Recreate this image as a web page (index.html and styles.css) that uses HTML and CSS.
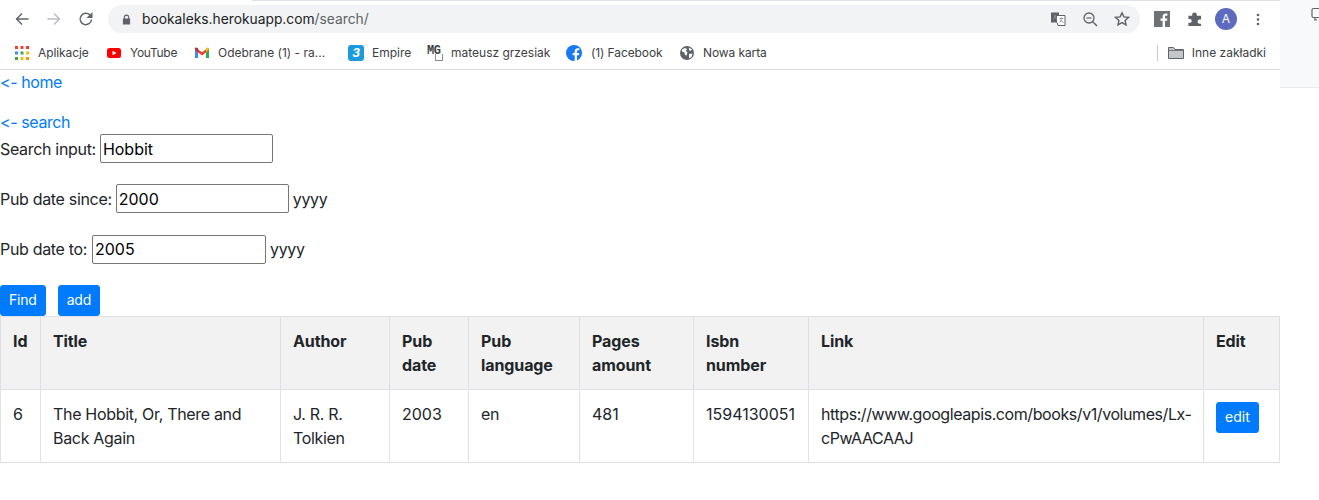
FILE: index.html
```html
<!DOCTYPE html>
<html lang="pl">
<head>
    <meta charset="UTF-8">
    <title>bookaleks</title>
    <link rel="stylesheet" href="styles.css">
</head>
<body>
<div class="window">
    <div class="browser">
        <div class="toolbar">
            <svg class="nav-icon" viewBox="0 0 16 16"><path d="M14.500 8H2.500M8 2.500L2.500 8 8 13.500" fill="none" stroke="#5f6368" stroke-width="1.400"/></svg>
            <svg class="nav-icon" viewBox="0 0 16 16"><path d="M1.500 8h12M8 2.500L13.500 8 8 13.500" fill="none" stroke="#b9bcc0" stroke-width="1.400"/></svg>
            <svg class="nav-icon" viewBox="0 0 16 16"><path d="M13.500 8.500A5.700 5.700 0 1 1 11.800 3.900" fill="none" stroke="#5f6368" stroke-width="1.500"/><path d="M14.500 1V7H8.500z" fill="#5f6368"/></svg>
            <div class="address">
                <svg class="lock" viewBox="0 0 10 12"><path d="M2 5V3.500a3 3 0 0 1 6 0V5h1v6.500H1V5zM3.200 5h3.600V3.500a1.800 1.800 0 0 0-3.600 0z" fill="#5f6368"/></svg>
                <span class="url">bookaleks.herokuapp.com<span class="url-path">/search/</span></span>
                <span class="address-end">
                    <svg class="addr-icon" viewBox="0 0 16 16"><rect x="1" y="1.500" width="8" height="10" fill="#5f6368"/><path d="M7 4.500h8v10H8L7 11.500" fill="#fff" stroke="#5f6368"/><path d="M3.500 8.500L5 4l1.500 4.500M9.500 7.500h4M11.500 6.500c0 3-1 4.500-2 5M10.500 9c1 1.500 2 2 3 2.500" fill="none" stroke="#8b8e92" stroke-width=".9"/></svg>
                    <svg class="addr-icon" viewBox="0 0 16 16"><circle cx="7" cy="7" r="5" fill="none" stroke="#5f6368" stroke-width="1.300"/><path d="M10.500 10.500L15 15" stroke="#5f6368" stroke-width="1.400"/><path d="M4.500 7h5" stroke="#5f6368" stroke-width="1.200"/></svg>
                    <svg class="addr-icon" viewBox="0 0 16 16"><path d="M8 1.800l1.900 4.100 4.500.5-3.300 3 .9 4.400L8 11.600l-4 2.200.9-4.400-3.300-3 4.500-.5z" fill="none" stroke="#5f6368" stroke-width="1.400"/></svg>
                </span>
            </div>
            <div class="toolbar-end">
                <svg class="ext-fb" viewBox="0 0 16 16"><rect width="16" height="16" fill="#6e7175"/><path d="M11 16V9.800h2l.3-2.400H11V6c0-.7.3-1.200 1.200-1.200h1.200V2.600c-.4 0-1-.1-1.700-.1C10 2.500 8.600 3.700 8.600 5.700v1.700H6.500v2.400h2.100V16z" fill="#fff"/></svg>
                <svg class="ext-puzzle" viewBox="0 0 16 16"><path d="M5.500 3a2.500 2.500 0 0 1 5 0V4H15v4h-1.500a2.300 2.300 0 0 0 0 4.600H15V15H1.500v-3.500H3a2 2 0 0 0 0-4H1.500V4h4z" fill="#5f6368"/></svg>
                <span class="avatar">A</span>
                <svg class="menu-dots" viewBox="0 0 4 16"><circle cx="2" cy="2.500" r="1.600" fill="#5f6368"/><circle cx="2" cy="8" r="1.600" fill="#5f6368"/><circle cx="2" cy="13.500" r="1.600" fill="#5f6368"/></svg>
            </div>
        </div>
        <div class="bookmarks">
            <span class="mark mark-apps">
                <svg viewBox="0 0 14 14"><path d="M0 0h3v3H0z" fill="#ea4335"/><path d="M5.500 0h3v3h-3z" fill="#ea4335"/><path d="M11 0h3v3h-3z" fill="#ea4335"/><path d="M0 5.500h3v3H0z" fill="#4285f4"/><path d="M5.500 5.500h3v3h-3z" fill="#34a853"/><path d="M11 5.500h3v3h-3z" fill="#fbbc05"/><path d="M0 11h3v3H0z" fill="#34a853"/><path d="M5.500 11h3v3h-3z" fill="#fbbc05"/><path d="M11 11h3v3h-3z" fill="#f29900"/></svg>
                Aplikacje
            </span>
            <span class="mark mark-yt">
                <svg viewBox="0 0 14 14"><rect y="2" width="14" height="10" rx="2.500" fill="#f00"/><path d="M5.500 4.800v4.400L9.500 7z" fill="#fff"/></svg>
                YouTube
            </span>
            <span class="mark mark-gmail">
                <svg viewBox="0 0 14 14"><path d="M0 12V3l1.500-1L3 3.200V12z" fill="#4285f4"/><path d="M11 12V3.200L12.500 2 14 3v9z" fill="#34a853"/><path d="M3 3.200L7 6.300l4-3.100V6.500L7 9.500 3 6.500z" fill="#ea4335"/><path d="M0 3c0-1.300 1.200-1.800 2-1.200L3 2.600v3.900z" fill="#c5221f"/><path d="M14 3c0-1.300-1.200-1.800-2-1.200l-1 .8v3.900z" fill="#fbbc05"/></svg>
                Odebrane (1) - ra...
            </span>
            <span class="mark mark-empire">
                <span class="empire-badge">3</span>
                Empire
            </span>
            <span class="mark mark-mg">
                <span class="mg-badge">MG</span>
                mateusz grzesiak
            </span>
            <span class="mark mark-fb">
                <svg viewBox="0 0 16 16"><circle cx="8" cy="8" r="8" fill="#1877f2"/><path d="M11 16V10.300h1.900l.3-2.300H11V6.500c0-.7.3-1.200 1.300-1.200h1V3.300C12.900 3.200 12.300 3.200 11.700 3.200 9.900 3.200 8.700 4.300 8.700 6.200V8H6.700v2.300h2V16z" fill="#fff"/></svg>
                (1) Facebook
            </span>
            <span class="mark mark-globe">
                <svg viewBox="0 0 14 14"><circle cx="7" cy="7" r="7" fill="#5f6368"/><path d="M2 3.500l3-1.500 2 1-1 2 1.500 1.500-1 3-1.500-.5-.5-2.500L2 5.500zM9 1.500l3 2-1.500 1.500-1.500-1zM9 8l3.500-.5-1 3.500-2.500 1.500z" fill="#fff"/></svg>
                Nowa karta
            </span>
            <span class="mark mark-other">
                <svg viewBox="0 0 16 14"><path d="M.5 12.500V1.500h5l1.500 2h8.500v9z" fill="#c4c6c9" stroke="#5f6368"/><path d="M.5 4.500h15" stroke="#5f6368" stroke-width=".8"/></svg>
                Inne zakładki
            </span>
        </div>
    </div>

    <div class="side-panel">
        <svg viewBox="0 0 16 16"><rect x="1" y="1.500" width="12" height="9" rx="1.500" fill="none" stroke="#5f6368" stroke-width="1.200"/><path d="M3 13h3M8 13h3M4 11v1.500M9 11v1.500" stroke="#5f6368" stroke-width="1.200"/></svg>
    </div>

    <main class="content">
        <p class="back-link"><a href="#">&lt;- home</a></p>
        <a class="back-link-plain" href="#">&lt;- search</a>

        <form class="search-form">
            <div class="form-row">
                <label for="q">Search input:</label>
                <input type="text" id="q" value="Hobbit">
            </div>
            <div class="form-row">
                <label for="since">Pub date since:</label>
                <input type="text" id="since" value="2000">
                <span>yyyy</span>
            </div>
            <div class="form-row form-row-to">
                <label for="to">Pub date to:</label>
                <input type="text" id="to" value="2005">
                <span>yyyy</span>
            </div>
            <div class="form-buttons">
                <button type="button" class="btn">Find</button>
                <button type="button" class="btn">add</button>
            </div>
        </form>

        <table class="books">
            <colgroup>
                <col class="col-id"><col class="col-title"><col class="col-author"><col class="col-date"><col class="col-lang"><col class="col-pages"><col class="col-isbn"><col class="col-link"><col class="col-edit">
            </colgroup>
            <thead>
                <tr>
                    <th>Id</th>
                    <th>Title</th>
                    <th>Author</th>
                    <th>Pub date</th>
                    <th>Pub language</th>
                    <th>Pages amount</th>
                    <th>Isbn number</th>
                    <th>Link</th>
                    <th>Edit</th>
                </tr>
            </thead>
            <tbody>
                <tr>
                    <td class="num">6</td>
                    <td>The Hobbit, Or, There and Back Again</td>
                    <td>J. R. R. Tolkien</td>
                    <td class="num">2003</td>
                    <td>en</td>
                    <td class="num">481</td>
                    <td class="num">1594130051</td>
                    <td class="link-cell">https://www.googleapis.com/books/v1/volumes/Lx-cPwAACAAJ</td>
                    <td><button type="button" class="btn btn-edit">edit</button></td>
                </tr>
            </tbody>
        </table>
    </main>
</div>
</body>
</html>
```

FILE: styles.css
```css
* {
    box-sizing: border-box;
}
body {
    margin: 0;
    background: white;
    color: #212529;
    font-family: Inter, "Liberation Sans", sans-serif;
    font-size: 16px;
    line-height: 24px;
    font-variant-ligatures: none;
    font-feature-settings: "calt" 0;
}
.window {
    display: grid;
    grid-template-columns: 1280px 39px;
    grid-template-rows: 70px auto;
}

/* browser bar */
.browser {
    height: 70px;
    padding-top: 1px;
    border-bottom: 1px solid #d9dadc;
    background: linear-gradient(90deg, white 252px, #dee1e6 252px) top / 100% 1px no-repeat;
    color: #3c4043;
}
.side-panel {
    grid-column: 2;
    grid-row: 1 / 3;
    align-self: start;
    position: relative;
    height: 88px;
    padding: 7px 0 0 31px;
    overflow: hidden;
    background: #f8f9fb;
    border-bottom: 1px solid #e9e9ea;
}
.side-panel::after {
    content: "";
    position: absolute;
    left: 29px;
    right: 0;
    bottom: -1px;
    height: 1px;
    background: #f08a70;
}
.side-panel svg {
    display: block;
    width: 16px;
    height: 16px;
}
.toolbar {
    display: flex;
    align-items: center;
    height: 36px;
    padding-left: 14px;
}
.nav-icon {
    width: 16px;
    height: 16px;
    margin-right: 16px;
    flex: none;
}
.address {
    display: flex;
    align-items: center;
    width: 1032px;
    height: 28px;
    margin-left: -2px;
    padding: 0 10px 0 14px;
    background: #f1f3f4;
    border-radius: 14px;
}
.lock {
    width: 9px;
    height: 11px;
    margin-right: 11px;
}
.url {
    font-size: 13.800px;
    color: #202124;
}
.url-path {
    color: #5f6368;
}
.address-end {
    display: flex;
    gap: 16px;
    margin-left: auto;
}
.addr-icon {
    width: 16px;
    height: 16px;
    display: block;
}
.toolbar-end {
    display: flex;
    align-items: center;
    margin-left: 14px;
}
.ext-fb {
    width: 16px;
    height: 16px;
}
.ext-puzzle {
    width: 15px;
    height: 15px;
    margin-left: 17px;
}
.avatar {
    width: 22px;
    height: 22px;
    margin-left: 13px;
    border-radius: 50%;
    background: #5c6bc0;
    color: white;
    font-size: 12px;
    line-height: 22px;
    text-align: center;
}
.menu-dots {
    width: 4px;
    height: 13px;
    margin-left: 19px;
}
.bookmarks {
    display: flex;
    align-items: center;
    height: 32px;
    padding-left: 15px;
    font-size: 12px;
    line-height: 16px;
}
.mark {
    display: flex;
    align-items: center;
    gap: 9px;
    white-space: nowrap;
}
.mark svg {
    width: 14px;
    height: 14px;
    flex: none;
}
.mark-apps { width: 92px; letter-spacing: -0.1px; }
.mark-yt { width: 88px; letter-spacing: -0.3px; }
.mark-gmail { width: 153px; }
.mark-empire { width: 79px; gap: 8px; }
.mark-mg { width: 139px; gap: 8px; }
.mark-fb { width: 114px; letter-spacing: -0.1px; }
.mark-globe { flex: 1; letter-spacing: -0.1px; }
.mark-fb svg {
    width: 16px;
    height: 16px;
}
.empire-badge {
    width: 16px;
    height: 16px;
    border-radius: 3px;
    background: #1b9ae0;
    color: white;
    font-size: 12px;
    font-weight: 700;
    font-style: italic;
    line-height: 16px;
    text-align: center;
}
.mg-badge {
    position: relative;
    width: 16px;
    height: 16px;
    color: #3c3f42;
    font-family: "Liberation Mono", monospace;
    font-size: 12px;
    font-weight: 700;
    letter-spacing: -0.5px;
    line-height: 12px;
}
.mg-badge::after {
    content: "";
    position: absolute;
    right: 0;
    bottom: 0;
    width: 6px;
    height: 6px;
    border: 1px solid #8a8c8f;
    border-top: none;
}
.mark-other {
    height: 16px;
    margin-right: 14px;
    padding-left: 10px;
    gap: 8px;
    border-left: 1px solid #c8c9cb;
}
.mark-other svg {
    width: 16px;
}

/* page */
.content {
    grid-column: 1;
    grid-row: 2;
    width: 1280px;
    letter-spacing: -0.32px;
}
a {
    color: #007bff;
    text-decoration: none;
}
.back-link {
    margin: 0 0 16px;
}
.back-link a,
.back-link-plain {
    letter-spacing: -0.4px;
}
.back-link-plain {
    display: block;
}
.form-row {
    display: flex;
    align-items: center;
    gap: 4px;
    height: 29px;
    margin-bottom: 21.300px;
}
.form-row input {
    width: 173px;
    height: 29px;
    padding: 1px 2px;
    border: 1px solid #767676;
    border-radius: 2px;
    font: inherit;
    letter-spacing: 0;
    color: black;
}
.form-row-to label {
    width: 88px;
}
.form-row-to input {
    width: 174px;
}
.form-buttons {
    display: flex;
    gap: 12px;
}
.btn {
    height: 31px;
    padding: 0 8px;
    border: 1px solid #007bff;
    border-radius: 3px;
    background: #007bff;
    color: white;
    font: inherit;
    font-size: 14px;
    letter-spacing: -0.2px;
}
.btn-edit {
    letter-spacing: 0;
}
.books {
    width: 1279px;
    table-layout: fixed;
    border-collapse: collapse;
}
.books th,
.books td {
    padding: 12px;
    border: 1px solid #dee2e6;
    text-align: left;
    vertical-align: top;
}
.books th {
    height: 73px;
    background: #f2f2f2;
    font-weight: 700;
    letter-spacing: -0.1px;
}
.books td {
    height: 73px;
}
.books td.num {
    letter-spacing: 0;
}
.books td.link-cell {
    letter-spacing: -0.42px;
}
.col-id { width: 40px; }
.col-title { width: 240px; }
.col-author { width: 109px; }
.col-date { width: 79px; }
.col-lang { width: 111px; }
.col-pages { width: 114px; }
.col-isbn { width: 115px; }
.col-link { width: 395px; }
.col-edit { width: 76px; }
```
